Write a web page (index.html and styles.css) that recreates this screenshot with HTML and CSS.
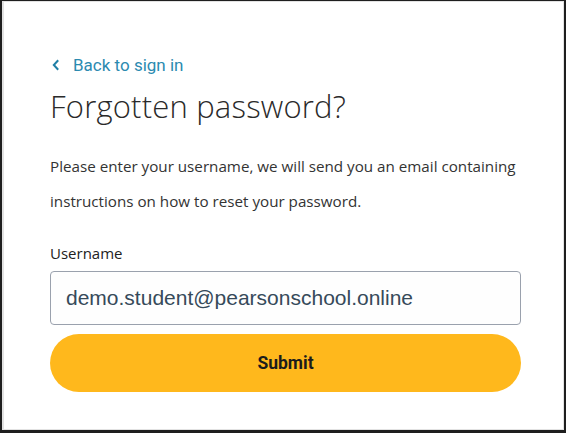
FILE: index.html
```html
<!DOCTYPE html>
<html lang="en">
<head>
<meta charset="utf-8">
<title>Forgotten password</title>
<link rel="stylesheet" href="styles.css">
</head>
<body>
<div class="frame">
  <div class="inner">
    <main class="content">
      <a class="back" href="#">
        <svg class="chev" width="8" height="12" viewBox="0 0 8 12" aria-hidden="true"><path d="M6.2 1.2 L1.8 6 L6.2 10.8" fill="none" stroke="#1f7fa6" stroke-width="2"/></svg>
        <span>Back to sign in</span>
      </a>
      <h1 class="title">Forgotten password?</h1>
      <p class="intro">Please enter your username, we will send you an email containing instructions on how to reset your password.</p>
      <label class="label" for="user">Username</label>
      <div class="field" id="user">demo.student@pearsonschool.online</div>
      <button class="submit" type="button">Submit</button>
    </main>
  </div>
</div>
</body>
</html>
```
FILE: styles.css
```css
html, body {
  margin: 0;
  padding: 0;
  background: #fff;
}
.frame {
  box-sizing: border-box;
  width: 566px;
  height: 433px;
  border-style: solid;
  border-color: #1e1e1e;
  border-width: 1px 2px 3px 2px;
}
.inner {
  box-sizing: border-box;
  height: 100%;
  border: 1px solid #e2e2e2;
  border-left-width: 2px;
  background: #fff;
}
.content {
  padding: 51px 41px 0 46px;
  display: flex;
  flex-direction: column;
}
.back {
  display: flex;
  align-items: center;
  gap: 13px;
  color: #2b8ab0;
  text-decoration: none;
  font-family: Roboto, "Liberation Sans", sans-serif;
  font-size: 17px;
  line-height: 24px;
  padding-left: 2px;
}
.chev { flex: none; }
.title {
  margin: 9px 0 0 0;
  font-family: "Open Sans", sans-serif;
  font-weight: 300;
  font-size: 31px;
  line-height: 40px;
  color: #2a2a2a;
  letter-spacing: 0.2px;
}
.intro {
  margin: 23px 0 0 0;
  font-family: "Open Sans", sans-serif;
  font-size: 15.2px;
  line-height: 35px;
  color: #333;
}
.label {
  margin-top: 23px;
  font-family: "Open Sans", sans-serif;
  font-size: 15px;
  line-height: 22px;
  color: #222;
}
.field {
  margin-top: 7px;
  box-sizing: border-box;
  width: 471px;
  height: 54px;
  border: 1px solid #9aa1ad;
  border-radius: 4px;
  padding: 0 15px;
  display: flex;
  align-items: center;
  font-family: "Liberation Sans", Arial, sans-serif;
  font-size: 21px;
  color: #364a5a;
  background: #fefefe;
}
.submit {
  margin-top: 9px;
  width: 471px;
  height: 58px;
  border: 0;
  border-radius: 29px;
  background: #ffb81c;
  font-family: Roboto, "Liberation Sans", sans-serif;
  font-weight: 700;
  font-size: 17.5px;
  color: #1c1c1c;
  padding: 0;
}
```
